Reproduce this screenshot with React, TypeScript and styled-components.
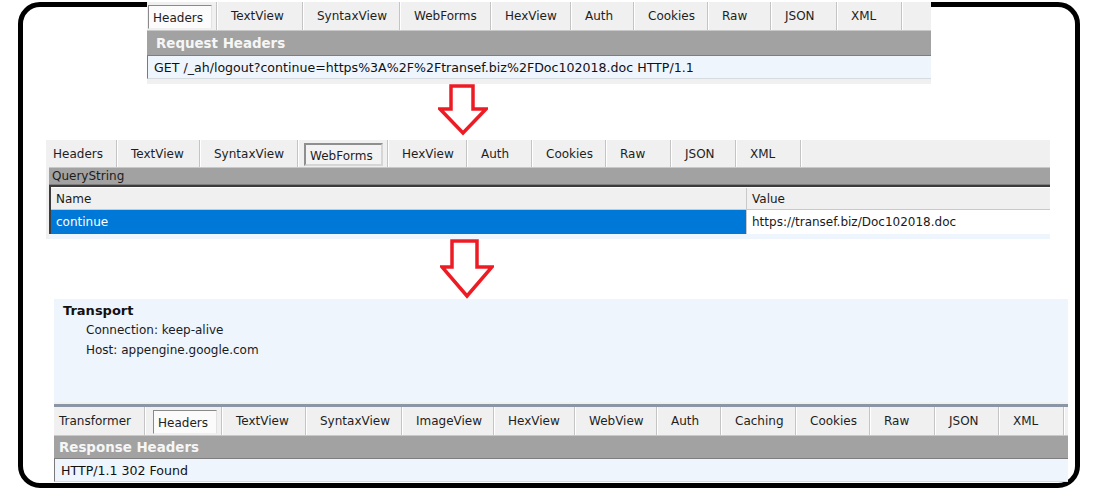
import React from 'react';
import styled, { createGlobalStyle } from 'styled-components';

const GlobalStyle = createGlobalStyle`
  html, body {
    margin: 0;
    padding: 0;
    background: #ffffff;
  }
  body {
    font-family: "DejaVu Sans", Verdana, sans-serif;
    font-size: 12px;
    color: #1a1a1a;
  }
`;

type TabDef = { label: string; w: number; pad?: number; selected?: boolean; sunken?: boolean };

const topTabs: TabDef[] = [
  { label: 'Headers', w: 70, pad: 1, selected: true },
  { label: 'TextView', w: 86 },
  { label: 'SyntaxView', w: 97 },
  { label: 'WebForms', w: 91 },
  { label: 'HexView', w: 80 },
  { label: 'Auth', w: 63 },
  { label: 'Cookies', w: 74 },
  { label: 'Raw', w: 63 },
  { label: 'JSON', w: 66 },
  { label: 'XML', w: 65 },
];

const midTabs: TabDef[] = [
  { label: 'Headers', w: 71, pad: 7 },
  { label: 'TextView', w: 83 },
  { label: 'SyntaxView', w: 98 },
  { label: 'WebForms', w: 90, pad: 6, selected: true, sunken: true },
  { label: 'HexView', w: 79 },
  { label: 'Auth', w: 65 },
  { label: 'Cookies', w: 74 },
  { label: 'Raw', w: 65 },
  { label: 'JSON', w: 65 },
  { label: 'XML', w: 65 },
];

const bottomTabs: TabDef[] = [
  { label: 'Transformer', w: 91, pad: 5 },
  { label: 'Headers', w: 77, pad: 8, selected: true },
  { label: 'TextView', w: 84 },
  { label: 'SyntaxView', w: 96 },
  { label: 'ImageView', w: 92 },
  { label: 'HexView', w: 81 },
  { label: 'WebView', w: 82 },
  { label: 'Auth', w: 64 },
  { label: 'Caching', w: 75 },
  { label: 'Cookies', w: 74 },
  { label: 'Raw', w: 65 },
  { label: 'JSON', w: 64 },
  { label: 'XML', w: 65 },
];

const TabBar = ({ tabs, height }: { tabs: TabDef[]; height: number }) => (
  <StyledTabBar $h={height}>
    {tabs.map((t) => (
      <StyledTab key={t.label} $w={t.w} $pad={t.pad ?? 14}>
        {t.selected ? <StyledSelBox $sunken={!!t.sunken}>{t.label}</StyledSelBox> : t.label}
      </StyledTab>
    ))}
  </StyledTabBar>
);

// red outlined "down" arrow between the captures
const DownArrow = ({ w, h, shaft, neck }: { w: number; h: number; shaft: [number, number]; neck: number }) => (
  <svg width={w} height={h} viewBox={`0 0 ${w} ${h}`}>
    <polygon
      points={`${shaft[0]},2 ${shaft[1]},2 ${shaft[1]},${neck} ${w - 2},${neck} ${w / 2},${h - 3} 2,${neck} ${shaft[0]},${neck}`}
      fill="none"
      stroke="#ed1c24"
      strokeWidth={3.5}
      strokeLinejoin="miter"
    />
  </svg>
);

const App = () => {
  return (
    <>
      <GlobalStyle />
      <StyledFrame>
        <StyledTopShot>
          <TabBar tabs={topTabs} height={28} />
          <StyledSectionBar $h={26} $pad={9} $bold>
            Request Headers
          </StyledSectionBar>
          <StyledTextRow $h={23}>GET /_ah/logout?continue=https%3A%2F%2Ftransef.biz%2FDoc102018.doc HTTP/1.1</StyledTextRow>
          <StyledFiller $h={5} />
        </StyledTopShot>

        <StyledArrowWrap $left={415}>
          <DownArrow w={50} h={52} shaft={[13, 35]} neck={25} />
        </StyledArrowWrap>

        <StyledMidShot>
          <TabBar tabs={midTabs} height={27} />
          <StyledMidBody>
            <StyledSectionBar $h={18} $pad={3}>
              QueryString
            </StyledSectionBar>
            <StyledGrid>
              <StyledGridHead>
                <StyledNameCell>Name</StyledNameCell>
                <StyledValueCell>Value</StyledValueCell>
              </StyledGridHead>
              <StyledGridRow>
                <StyledNameCell $selected>continue</StyledNameCell>
                <StyledValueCell $white>https://transef.biz/Doc102018.doc</StyledValueCell>
              </StyledGridRow>
            </StyledGrid>
            <StyledFiller $h={5} $blue />
          </StyledMidBody>
        </StyledMidShot>

        <StyledArrowWrap $left={417}>
          <DownArrow w={54} h={60} shaft={[12, 37]} neck={28} />
        </StyledArrowWrap>

        <StyledBottomShot>
          <StyledTransport>
            <StyledGroupTitle>Transport</StyledGroupTitle>
            <StyledGroupItem>Connection: keep-alive</StyledGroupItem>
            <StyledGroupItem>Host: appengine.google.com</StyledGroupItem>
          </StyledTransport>
          <StyledSplitter />
          <TabBar tabs={bottomTabs} height={28} />
          <StyledSectionBar $h={24} $pad={5} $bold>
            Response Headers
          </StyledSectionBar>
          <StyledTextRow $h={23}>HTTP/1.1 302 Found</StyledTextRow>
        </StyledBottomShot>
      </StyledFrame>
    </>
  );
};

export default App;

const StyledFrame = styled.div`
  box-sizing: border-box;
  margin: 2px 0 0 18px;
  width: 1062px;
  height: 486px;
  border: 5px solid #000;
  border-radius: 22px;
  display: flex;
  flex-direction: column;
`;

const StyledTopShot = styled.div`
  margin: -5px 0 0 124px;
  width: 784px;
  display: flex;
  flex-direction: column;
  background: #f0f0f0;
  position: relative;
`;

const StyledMidShot = styled.div`
  margin: 4px 0 0 23px;
  width: 1004px;
  display: flex;
  flex-direction: column;
  background: #f0f0f0;
`;

const StyledMidBody = styled.div`
  display: flex;
  flex-direction: column;
  padding-left: 3px;
`;

const StyledBottomShot = styled.div`
  margin: 0 0 0 31px;
  width: 1014px;
  display: flex;
  flex-direction: column;
  background: #f0f0f0;
`;

const StyledArrowWrap = styled.div<{ $left: number }>`
  margin-left: ${({ $left }) => $left}px;
  display: flex;
  line-height: 0;
  svg {
    display: block;
  }
`;

const StyledTabBar = styled.div<{ $h: number }>`
  display: flex;
  height: ${({ $h }) => $h}px;
  background: #f0f0f0;
  flex-shrink: 0;
`;

const StyledTab = styled.div<{ $w: number; $pad: number }>`
  box-sizing: border-box;
  flex: 0 0 ${({ $w }) => $w}px;
  display: flex;
  align-items: center;
  padding-left: ${({ $pad }) => $pad}px;
  border-right: 1px solid #c4c4c4;
  box-shadow: 1px 0 0 #ffffff;
  white-space: nowrap;
  color: #1e1e1e;
`;

const StyledSelBox = styled.div<{ $sunken: boolean }>`
  box-sizing: border-box;
  align-self: stretch;
  margin: 3px 0 1px;
  display: flex;
  align-items: center;
  padding: 2px 6px 0 4px;
  width: calc(100% - 4px);
  background: ${({ $sunken }) => ($sunken ? '#f3f3f3' : '#fbfbfb')};
  border-style: solid;
  border-width: ${({ $sunken }) => ($sunken ? '2px' : '1px')};
  border-color: ${({ $sunken }) => ($sunken ? '#8f8f8f #d6d6d6 #d6d6d6 #8f8f8f' : '#8a8a8a #e2e2e2 #f0f0f0 #8a8a8a')};
`;

const StyledSectionBar = styled.div<{ $h: number; $pad: number; $bold?: boolean }>`
  box-sizing: border-box;
  height: ${({ $h }) => $h}px;
  display: flex;
  align-items: center;
  padding-left: ${({ $pad }) => $pad}px;
  background: #a2a2a2;
  border-top: 1px solid #c8c8c8;
  border-bottom: 1px solid #7e7e7e;
  color: ${({ $bold }) => ($bold ? '#f6f6f6' : '#1c1c1c')};
  font-weight: ${({ $bold }) => ($bold ? 700 : 400)};
  font-size: ${({ $bold }) => ($bold ? '13.4px' : '12px')};
  flex-shrink: 0;
`;

const StyledTextRow = styled.div<{ $h: number }>`
  box-sizing: border-box;
  height: ${({ $h }) => $h}px;
  display: flex;
  align-items: center;
  padding-left: 6px;
  background: #eef5fd;
  border-left: 1px solid #7a7a7a;
  border-bottom: 1px solid #d6dbe0;
  white-space: nowrap;
  font-size: 12.6px;
  color: #111;
  flex-shrink: 0;
`;

const StyledFiller = styled.div<{ $h: number; $blue?: boolean }>`
  height: ${({ $h }) => $h}px;
  background: ${({ $blue }) => ($blue ? '#eef5fd' : '#f0f0f0')};
`;

const StyledGrid = styled.div`
  display: flex;
  flex-direction: column;
  border-top: 2px solid #3c3c3c;
  border-left: 2px solid #3c3c3c;
  background: #eef5fd;
`;

const StyledGridHead = styled.div`
  display: flex;
  height: 21px;
  background: #f0f0f0;
  border-bottom: 1px solid #c9c9c9;
  border-top: 1px solid #ffffff;
`;

const StyledGridRow = styled.div`
  display: flex;
  height: 24px;
`;

const StyledNameCell = styled.div<{ $selected?: boolean }>`
  box-sizing: border-box;
  flex: 0 0 696px;
  display: flex;
  align-items: center;
  padding-left: 5px;
  border-right: 1px solid #c9c9c9;
  background: ${({ $selected }) => ($selected ? '#0078d7' : 'transparent')};
  color: ${({ $selected }) => ($selected ? '#ffffff' : '#1a1a1a')};
`;

const StyledValueCell = styled.div<{ $white?: boolean }>`
  box-sizing: border-box;
  flex: 1;
  display: flex;
  align-items: center;
  padding-left: 5px;
  background: ${({ $white }) => ($white ? '#ffffff' : 'transparent')};
  color: #1a1a1a;
`;

const StyledTransport = styled.div`
  box-sizing: border-box;
  height: 103px;
  background: #eef5fd;
  padding: 3px 0 0 9px;
  display: flex;
  flex-direction: column;
`;

const StyledGroupTitle = styled.div`
  font-weight: 700;
  font-size: 13px;
  line-height: 18px;
  color: #111;
`;

const StyledGroupItem = styled.div`
  padding-left: 23px;
  line-height: 20px;
  color: #1a1a1a;
`;

const StyledSplitter = styled.div`
  height: 2px;
  background: #f0f0f0;
  border-bottom: 3px solid #8a96a6;
`;
